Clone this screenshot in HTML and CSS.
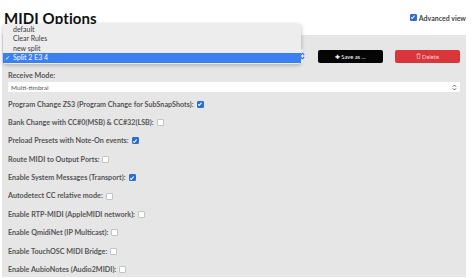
FILE: index.html
```html
<!DOCTYPE html>
<html>
<head>
<meta charset="utf-8">
<link rel="stylesheet" href="styles.css">
</head>
<body>
<div class="top">
  <h1 class="title">MIDI Options</h1>
  <label class="adv"><span class="cb on"></span>Advanced view</label>
</div>
<div class="panel">
  <div class="preset-row">
    <div class="preset-select">
      <div class="popup">
        <div class="opt">default</div>
        <div class="opt">Clear Rules</div>
        <div class="opt">new split</div>
        <div class="opt sel"><span class="tick">✓</span>Split 2 E3 4</div>
      </div>
      <svg class="popup-arrows" width="5" height="8" viewBox="0 0 5 8"><path d="M0.8 3 L2.5 1.2 L4.2 3 M0.8 5 L2.5 6.8 L4.2 5" fill="none" stroke="#2f6fe8" stroke-width="1.1"/></svg>
    </div>
    <button class="btn save"><span class="plus">✚</span> Save as ...</button>
    <button class="btn del"><svg class="trash" width="5" height="6" viewBox="0 0 5 6"><path d="M0.5 1.3 H4.5 M1.7 1.3 V0.6 H3.3 V1.3 M1 1.3 L1.3 5.5 H3.7 L4 1.3" fill="none" stroke="#f6c9c9" stroke-width="0.6"/></svg> Delete</button>
  </div>
  <div class="label">Receive Mode:</div>
  <div class="select">
    <span>Multi-timbral</span>
    <svg width="5" height="7" viewBox="0 0 5 7"><path d="M1 2.6 L2.5 1.1 L4 2.6 M1 4.4 L2.5 5.9 L4 4.4" fill="none" stroke="#444" stroke-width="0.9"/></svg>
  </div>
  <div class="rows">
    <div class="row">Program Change ZS3 (Program Change for SubSnapShots):<span class="cb on"></span></div>
    <div class="row">Bank Change with CC#0(MSB) &amp; CC#32(LSB):<span class="cb"></span></div>
    <div class="row">Preload Presets with Note-On events:<span class="cb on"></span></div>
    <div class="row">Route MIDI to Output Ports:<span class="cb"></span></div>
    <div class="row">Enable System Messages (Transport):<span class="cb on"></span></div>
    <div class="row">Autodetect CC relative mode:<span class="cb"></span></div>
    <div class="row">Enable RTP-MIDI (AppleMIDI network):<span class="cb"></span></div>
    <div class="row">Enable QmidiNet (IP Multicast):<span class="cb"></span></div>
    <div class="row">Enable TouchOSC MIDI Bridge:<span class="cb"></span></div>
    <div class="row">Enable AubioNotes (Audio2MIDI):<span class="cb"></span></div>
  </div>
</div>
</body>
</html>
```
FILE: styles.css
```css
html, body {
  margin: 0;
  padding: 0;
  background: #ffffff;
}
body {
  font-family: Lato, "Liberation Sans", sans-serif;
  color: #555;
  width: 474px;
  height: 278px;
  overflow: hidden;
}
.top {
  height: 35px;
  display: flex;
  justify-content: space-between;
  align-items: flex-start;
  padding: 0 8px 0 4px;
  box-sizing: border-box;
}
.title {
  margin: 0;
  margin-top: 9px;
  font-size: 15px;
  line-height: 18px;
  font-weight: 700;
  color: #111;
  letter-spacing: 0.1px;
}
.adv {
  margin-top: 14px;
  display: flex;
  align-items: center;
  font-size: 7px;
  font-weight: 700;
  color: #444;
  line-height: 8px;
}
.adv .cb {
  margin: 0 1.5px 0 0;
}
.cb {
  display: inline-block;
  width: 5px;
  height: 5px;
  border: 0.5px solid #c4c4c4;
  background: #fff;
  border-radius: 1px;
  margin-left: 3px;
  vertical-align: middle;
  position: relative;
  top: -0.5px;
}
.cb.on {
  background: #2b6ed8;
  border-color: #2b6ed8;
}
.cb.on::after {
  content: "";
  position: absolute;
  left: 1.2px;
  top: 0.4px;
  width: 1.3px;
  height: 2.6px;
  border: solid #fff;
  border-width: 0 0.9px 0.9px 0;
  transform: rotate(40deg);
}
.panel {
  margin-left: 2px;
  width: 464px;
  height: 242px;
  background: #e6e6e6;
  padding: 14px 6px 0 6px;
  box-sizing: border-box;
}
.preset-row {
  display: flex;
  align-items: center;
  height: 14px;
}
.preset-select {
  position: relative;
  width: 295px;
  height: 14px;
  background: #fff;
}
.popup {
  position: absolute;
  left: -5px;
  top: -25px;
  width: 298px;
  height: 40px;
  background: #ededed;
  border-radius: 3px;
  box-shadow: 0 1px 4px rgba(0,0,0,0.28);
  padding-top: 1px;
  box-sizing: border-box;
  font-size: 7px;
  color: #3a3a3a;
}
.opt {
  height: 9.4px;
  line-height: 9.4px;
  padding-left: 10px;
  position: relative;
}
.opt.sel {
  background: #3a80f2;
  color: #fff;
}
.tick {
  position: absolute;
  left: 2px;
  font-size: 6px;
}
.popup-arrows {
  position: absolute;
  left: 292px;
  top: 3px;
}
.btn {
  height: 13px;
  width: 65px;
  border: none;
  border-radius: 2px;
  font-family: Lato, "Liberation Sans", sans-serif;
  font-size: 5.8px;
  padding: 0;
  display: flex;
  align-items: center;
  justify-content: center;
  gap: 1px;
}
.save {
  margin-left: 15px;
  background: #050505;
  color: #fff;
}
.plus {
  font-size: 6px;
}
.del {
  margin-left: 12px;
  background: #d9363c;
  color: #f7cfcf;
}
.label {
  margin-top: 8px;
  height: 9px;
  line-height: 9px;
  font-size: 7.2px;
  font-weight: 700;
  color: #555;
}
.select {
  margin-top: 2px;
  width: 452px;
  height: 10px;
  background: #fff;
  border-radius: 1px;
  display: flex;
  align-items: center;
  justify-content: space-between;
  padding: 0 3px 0 3px;
  box-sizing: border-box;
  font-size: 6.5px;
  color: #555;
}
.rows {
  margin-top: 3.5px;
}
.row {
  height: 18.4px;
  line-height: 18.4px;
  font-size: 7.2px;
  font-weight: 700;
  color: #555;
  display: flex;
  align-items: center;
}
```
